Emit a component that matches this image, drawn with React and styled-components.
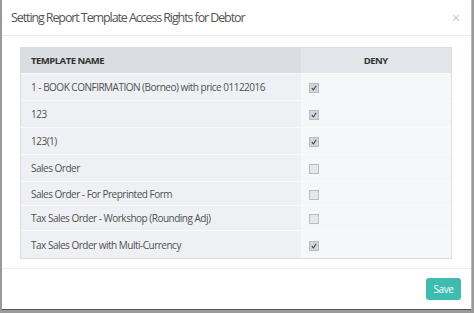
import React, { useState } from "react";
import styled, { createGlobalStyle } from "styled-components";

const GlobalStyle = createGlobalStyle`
  html, body {
    margin: 0;
    padding: 0;
    background: #9a9a9a;
  }
  body {
    font-family: "Open Sans", "Liberation Sans", sans-serif;
    color: #555;
  }
`;

const Modal = styled.div`
  width: 469px;
  height: 309px;
  margin-left: 2px;
  background: #fff;
  border-bottom: 1px solid #555;
  border-right: 1px solid #bbb;
  display: flex;
  flex-direction: column;
`;

const Header = styled.div`
  height: 36px;
  display: flex;
  align-items: center;
  justify-content: space-between;
  padding: 0 11px 0 9px;
  border-bottom: 1px solid #e9e9e9;
  box-sizing: border-box;
`;

const Title = styled.h4`
  margin: 0;
  font-size: 12.5px;
  font-weight: 400;
  color: #555;
  letter-spacing: -1.1px;
`;

const Close = styled.span`
  font-size: 14px;
  color: #c8c8c8;
  line-height: 1;
`;

const Body = styled.div`
  padding: 11px 19px 9px 18px;
  border-bottom: 1px solid #eee;
`;

const Table = styled.table`
  width: 100%;
  table-layout: fixed;
  border-collapse: collapse;
  border: 1px solid #d9dce1;
  font-size: 10px;
  letter-spacing: -0.5px;
`;

const Th = styled.th`
  height: 26px;
  text-align: ${(p) => (p.$center ? "center" : "left")};
  padding: 0 10px;
  font-weight: 700;
  font-size: 9.5px;
  color: #333;
  background: ${(p) => (p.$center ? "#e3e6ea" : "#dadde2")};
  width: ${(p) => (p.$center ? "auto" : "280px")};
  box-sizing: border-box;
`;

const Td = styled.td`
  height: ${(p) => p.$h}px;
  padding: 0 10px;
  color: #505050;
  background: ${(p) => (p.$light ? "#f6f7f9" : "#eef0f3")};
  border-top: 1px solid #f9fafb;
  white-space: nowrap;
`;

const Check = styled.span`
  display: inline-block;
  width: 8px;
  height: 8px;
  border: 1px solid #b9bcc3;
  background: ${(p) => (p.$on ? "#d3d5de" : "#e6e7ea")};
  margin-left: -2px;
  vertical-align: middle;
  position: relative;
  svg {
    position: absolute;
    left: 1px;
    top: 1px;
  }
`;

const Footer = styled.div`
  flex: 1;
  display: flex;
  justify-content: flex-end;
  align-items: center;
  padding: 0 10px 0 0;
`;

const SaveButton = styled.button`
  background: #3fbcb0;
  border: none;
  border-radius: 3px;
  color: #fff;
  font-family: "Open Sans", "Liberation Sans", sans-serif;
  font-size: 10px;
  letter-spacing: -0.4px;
  width: 35px;
  height: 22px;
  padding: 0;
  cursor: pointer;
`;

const rows = [
  { name: "1 - BOOK CONFIRMATION (Borneo) with price 01122016", deny: true, h: 26 },
  { name: "123", deny: true, h: 26 },
  { name: "123(1)", deny: true, h: 26 },
  { name: "Sales Order", deny: false, h: 26 },
  { name: "Sales Order - For Preprinted Form", deny: false, h: 23 },
  { name: "Tax Sales Order - Workshop (Rounding Adj)", deny: false, h: 24 },
  { name: "Tax Sales Order with Multi-Currency", deny: true, h: 27 },
];

const App = () => {
  const [data, setData] = useState(rows);

  const toggle = (i) => {
    setData(data.map((r, j) => (j === i ? { ...r, deny: !r.deny } : r)));
  };

  return (
    <>
      <GlobalStyle />
      <Modal>
        <Header>
          <Title>Setting Report Template Access Rights for Debtor</Title>
          <Close>×</Close>
        </Header>
        <Body>
          <Table>
            <thead>
              <tr>
                <Th>TEMPLATE NAME</Th>
                <Th $center>DENY</Th>
              </tr>
            </thead>
            <tbody>
              {data.map((r, i) => (
                <tr key={r.name}>
                  <Td $h={r.h}>{r.name}</Td>
                  <Td $h={r.h} $light>
                    <Check $on={r.deny} onClick={() => toggle(i)}>
                      {r.deny && (
                        <svg width="6" height="6" viewBox="0 0 6 6">
                          <path d="M0.8 3.2 L2.4 4.8 L5.2 0.8" fill="none" stroke="#444" strokeWidth="1.1" />
                        </svg>
                      )}
                    </Check>
                  </Td>
                </tr>
              ))}
            </tbody>
          </Table>
        </Body>
        <Footer>
          <SaveButton>Save</SaveButton>
        </Footer>
      </Modal>
    </>
  );
};

export default App;
